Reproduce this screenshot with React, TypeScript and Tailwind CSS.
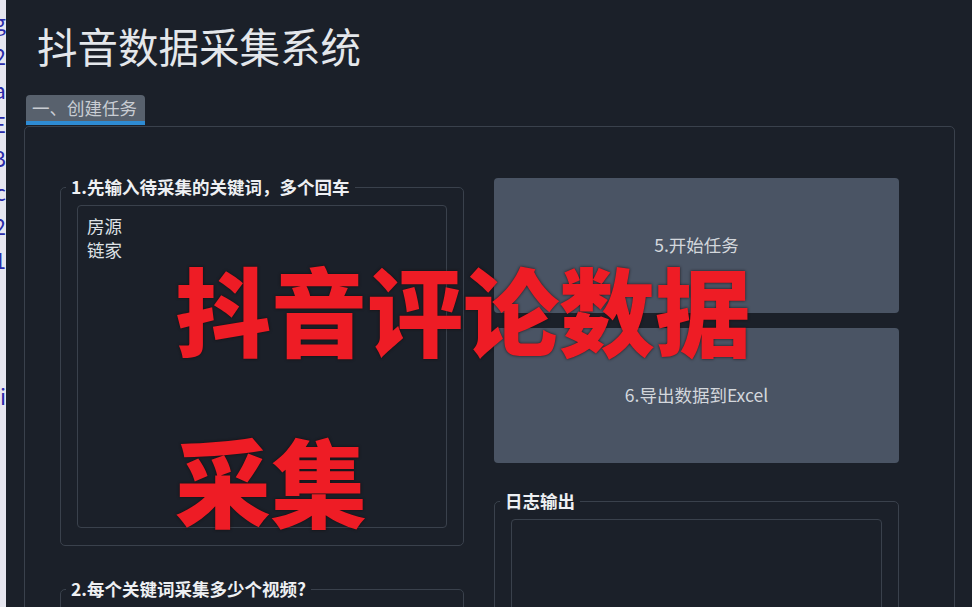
import React from "react";

const font = { fontFamily: '"Noto Sans CJK SC", "Noto Sans", sans-serif' };

const stripChars = ["g", "2", "a", "E", "B", "c", "2", "1", "", "", "", "i"];

function GroupBox({
  title,
  className,
  children,
}: {
  title: string;
  className?: string;
  children?: React.ReactNode;
}) {
  return (
    <fieldset
      className={`border border-[#3a414c] rounded-[5px] px-[16px] pb-[18px] ${className ?? ""}`}
    >
      <legend className="-ml-[11px] px-[5px] text-[17.5px] font-bold leading-[20px] text-[#eef0f3]">
        {title}
      </legend>
      {children}
    </fieldset>
  );
}

export default function App() {
  return (
    <div
      className="relative flex h-[607px] w-[972px] overflow-hidden bg-[#1b2029]"
      style={font}
    >
      {/* sliver of the window behind */}
      <div className="flex w-[6px] shrink-0 flex-col items-end overflow-hidden bg-[#e6e6ef] pt-[4px] text-[22px] leading-[34px] text-[#2a2aa8]">
        {stripChars.map((c, i) => (
          <span key={i} className="block h-[34px]">
            {c}
          </span>
        ))}
      </div>

      <div className="flex-1 px-[18px] pt-[22px]">
        <h1 className="ml-[13px] text-[40.5px] font-normal leading-[48px] text-[#e4e7eb]">
          抖音数据采集系统
        </h1>

        <div className="ml-[2px] mt-[25px] flex h-[30px] w-[119px] items-center rounded-t-[4px] border-b-4 border-[#2e8bd3] bg-[#58616d] px-[6px] text-[17.5px] text-[#c9cdd3]">
          一、创建任务
        </div>

        <div className="mt-[1px] h-[600px] rounded-[5px] border border-[#3a414c] pl-[35px] pr-[55px] pt-[50px]">
          <div className="flex gap-[30px]">
            <div className="flex w-[404px] flex-col gap-[33px]">
              <GroupBox title="1.先输入待采集的关键词，多个回车" className="h-[369px]">
                <div className="mt-[8px] h-[323px] rounded-[4px] border border-[#3a414c] px-[9px] pt-[8px] text-[17.5px] leading-[24px] text-[#dfe2e6]">
                  <div>房源</div>
                  <div>链家</div>
                </div>
              </GroupBox>
              <GroupBox title="2.每个关键词采集多少个视频?" className="h-[100px]" />
            </div>

            <div className="flex w-[405px] flex-col pt-[1px]">
              <button className="h-[135px] rounded-[4px] bg-[#4a5464] text-[17.5px] text-[#d3d7dc]">
                5.开始任务
              </button>
              <button className="mt-[15px] h-[135px] rounded-[4px] bg-[#4a5464] text-[17.5px] text-[#d3d7dc]">
                6.导出数据到Excel
              </button>
              <GroupBox title="日志输出" className="mt-[28px] h-[200px]">
                <div className="mt-[8px] h-[150px] rounded-[4px] border border-[#3a414c]" />
              </GroupBox>
            </div>
          </div>
        </div>
      </div>

      {/* watermark caption over the screenshot */}
      <div
        className="pointer-events-none absolute left-[175px] top-[260px] text-[96px] font-black leading-none text-[#ee1c25]"
        style={{ textShadow: "0 0 3px rgba(20,10,10,0.8)" }}
      >
        <div>抖音评论数据</div>
        <div className="mt-[75px]">采集</div>
      </div>
    </div>
  );
}
